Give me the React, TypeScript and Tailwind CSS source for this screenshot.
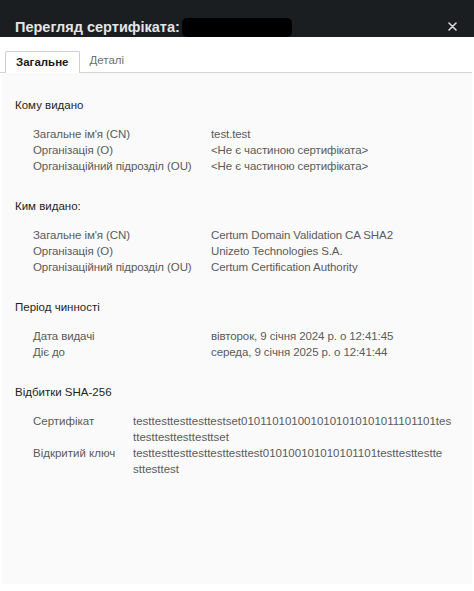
import React from 'react';

const issuedTo = [
  ["Загальне ім'я (CN)", 'test.test'],
  ['Організація (O)', '<Не є частиною сертифіката>'],
  ['Організаційний підрозділ (OU)', '<Не є частиною сертифіката>'],
];

const issuedBy = [
  ["Загальне ім'я (CN)", 'Certum Domain Validation CA SHA2'],
  ['Організація (O)', 'Unizeto Technologies S.A.'],
  ['Організаційний підрозділ (OU)', 'Certum Certification Authority'],
];

const validity = [
  ['Дата видачі', 'вівторок, 9 січня 2024 р. о 12:41:45'],
  ['Діє до', 'середа, 9 січня 2025 р. о 12:41:44'],
];

const fingerprints = [
  ['Сертифікат', ['testtesttesttesttestset0101101010010101010101011101101tes', 'ttesttesttesttesttset']],
  ['Відкритий ключ', ['testtesttesttesttesttesttest010100101010101101testtesttestte', 'sttesttest']],
];

const Section = ({ title, rows }: { title: string; rows: string[][] }) => (
  <div className="mb-[24px]">
    <h3 className="text-[11.5px] leading-4 text-[#1e1e1e]">{title}</h3>
    <div className="mt-[13px] pl-[18px]">
      {rows.map(([label, value]) => (
        <div key={label} className="flex text-[11.5px] leading-4 text-[#5b5b5b] tracking-[-0.1px]">
          <span className="w-[178px] shrink-0">{label}</span>
          <span>{value}</span>
        </div>
      ))}
    </div>
  </div>
);

const App = () => {
  return (
    <div className="w-[474px] h-[591px] bg-white overflow-hidden" style={{ fontFamily: '"Liberation Sans", "Noto Sans", sans-serif' }}>
      {/* шапка */}
      <div className="h-[37px] bg-[#1b1e21] flex items-end pl-[15px] pr-[40px] relative">
        <div className="flex items-end">
          <span className="text-[14.5px] leading-[18px] font-semibold text-[#e4e4e4] mb-[1px]">Перегляд сертифіката:</span>
          <span className="ml-[2px] w-[110px] h-[19px] bg-black rounded-[5px]"></span>
        </div>
        <svg className="absolute left-[448px] top-[22px]" width="9" height="9" viewBox="0 0 9 9">
          <path d="M1 1L8 8M8 1L1 8" stroke="#d8d8d8" strokeWidth="1.6" strokeLinecap="round" />
        </svg>
      </div>

      {/* вкладки */}
      <div className="pt-[13px] pl-[5px] flex items-end border-b border-[#d4d4d4] mr-[2px]">
        <div className="h-[22px] px-[10px] bg-white border border-b-0 border-[#cfcfcf] rounded-t-[2px] -mb-px flex items-center">
          <span className="text-[11.5px] font-bold text-[#1a1a1a]">Загальне</span>
        </div>
        <div className="h-[22px] px-[10px] flex items-center">
          <span className="text-[11.5px] text-[#6f6f6f]">Деталі</span>
        </div>
      </div>

      {/* вміст */}
      <div className="mx-[2px] h-[511px] bg-[#fafafa] pt-[24px] pl-[13px] pr-[8px]">
        <Section title="Кому видано" rows={issuedTo} />
        <Section title="Ким видано:" rows={issuedBy} />
        <Section title="Період чинності" rows={validity} />

        <div>
          <h3 className="text-[11.5px] leading-4 text-[#1e1e1e]">Відбитки SHA-256</h3>
          <div className="mt-[13px] pl-[18px]">
            {fingerprints.map(([label, lines]) => (
              <div key={label as string} className="flex text-[11.5px] leading-4 text-[#5b5b5b]">
                <span className="w-[100px] shrink-0">{label as string}</span>
                <div>
                  {(lines as string[]).map((l) => (
                    <div key={l} className="whitespace-nowrap">{l}</div>
                  ))}
                </div>
              </div>
            ))}
          </div>
        </div>
      </div>
    </div>
  );
};

export default App;
